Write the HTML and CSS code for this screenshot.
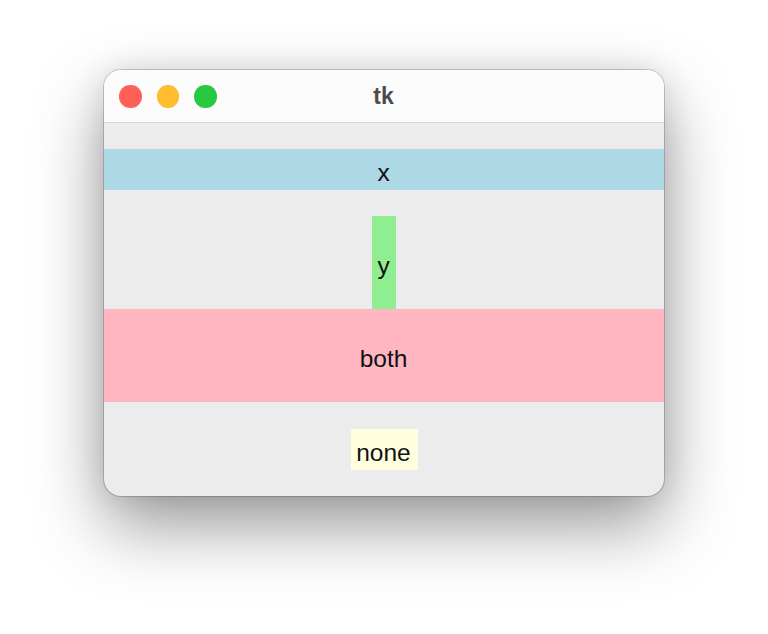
FILE: index.html
```html
<!DOCTYPE html>
<html>
<head>
<meta charset="utf-8">
<link rel="stylesheet" href="styles.css">
</head>
<body>
<div class="window">
  <div class="titlebar">
    <div class="lights">
      <span class="light red"></span>
      <span class="light yellow"></span>
      <span class="light green"></span>
    </div>
    <div class="title">tk</div>
  </div>
  <div class="content">
    <div class="lbl lbl-x">x</div>
    <div class="lbl lbl-y">y</div>
    <div class="lbl lbl-both">both</div>
    <div class="lbl lbl-none">none</div>
  </div>
</div>
</body>
</html>
```
FILE: styles.css
```css
html, body {
  margin: 0;
  padding: 0;
  background: #ffffff;
  width: 768px;
  height: 634px;
  overflow: hidden;
}
body {
  display: flex;
  align-items: flex-start;
  font-family: "Liberation Sans", Arial, sans-serif;
}
.window {
  margin: 70px 0 0 104px;
  width: 560px;
  height: 426px;
  border-radius: 17px;
  overflow: hidden;
  background: #ececec;
  box-shadow: 0 0 0 1px rgba(0,0,0,0.18), 0 30px 70px rgba(0,0,0,0.40), 0 0 30px rgba(0,0,0,0.10);
  display: flex;
  flex-direction: column;
}
.titlebar {
  position: relative;
  height: 52px;
  flex: none;
  background: #fcfcfc;
  border-bottom: 1px solid #d6d6d6;
  display: flex;
  align-items: center;
}
.lights {
  display: flex;
  gap: 15px;
  padding-left: 15px;
  margin-top: 1px;
}
.light {
  width: 22.5px;
  height: 22.5px;
  border-radius: 50%;
  display: block;
}
.red { background: #fe5f57; }
.yellow { background: #febc2e; }
.green { background: #28c840; }
.title {
  position: absolute;
  left: 0;
  right: 0;
  top: 0;
  bottom: 0;
  display: flex;
  align-items: center;
  justify-content: center;
  font-weight: bold;
  font-size: 23px;
  color: #4b4b4b;
  padding-right: 1px;
}
.content {
  flex: 1;
  display: flex;
  flex-direction: column;
  align-items: center;
  padding-top: 26px;
}
.lbl {
  display: flex;
  align-items: center;
  justify-content: center;
  font-size: 24.5px;
  color: #111;
  padding-top: 7px;
  padding-right: 1px;
  box-sizing: border-box;
}
.lbl-x {
  align-self: stretch;
  height: 41px;
  background: #add8e6;
  margin-bottom: 26px;
}
.lbl-y {
  width: 24px;
  height: 93px;
  background: #90ee90;
}
.lbl-both {
  align-self: stretch;
  height: 93px;
  background: #ffb6c1;
  margin-bottom: 27px;
}
.lbl-none {
  width: 67px;
  height: 41px;
  background: #ffffe0;
}
```
